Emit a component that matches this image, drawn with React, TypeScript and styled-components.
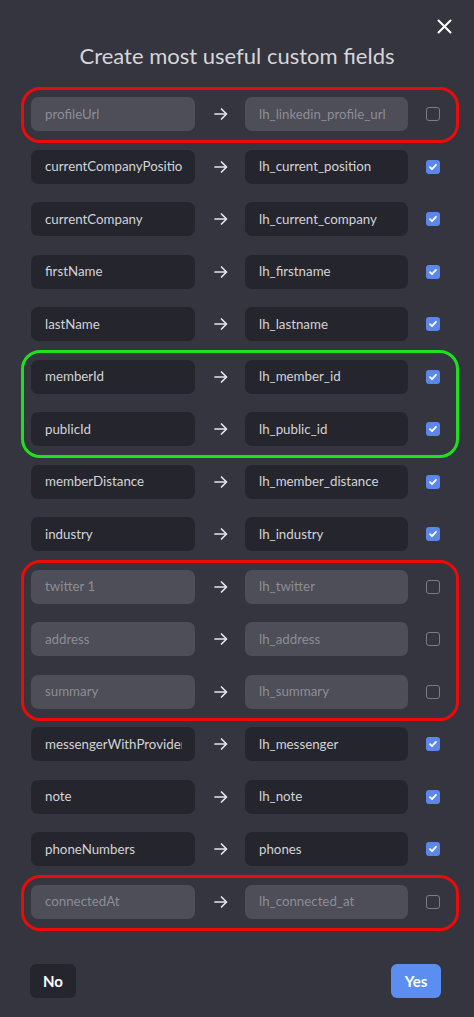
import React from "react";
import styled, { createGlobalStyle } from "styled-components";

const GlobalStyle = createGlobalStyle`
  html, body {
    margin: 0;
    padding: 0;
    background: #34353e;
  }
  body {
    font-family: Lato, "Noto Sans", sans-serif;
  }
`;

interface Field {
  from: string;
  to: string;
  checked: boolean;
}

const fields: Field[] = [
  { from: "profileUrl", to: "lh_linkedin_profile_url", checked: false },
  { from: "currentCompanyPosition", to: "lh_current_position", checked: true },
  { from: "currentCompany", to: "lh_current_company", checked: true },
  { from: "firstName", to: "lh_firstname", checked: true },
  { from: "lastName", to: "lh_lastname", checked: true },
  { from: "memberId", to: "lh_member_id", checked: true },
  { from: "publicId", to: "lh_public_id", checked: true },
  { from: "memberDistance", to: "lh_member_distance", checked: true },
  { from: "industry", to: "lh_industry", checked: true },
  { from: "twitter 1", to: "lh_twitter", checked: false },
  { from: "address", to: "lh_address", checked: false },
  { from: "summary", to: "lh_summary", checked: false },
  { from: "messengerWithProvider", to: "lh_messenger", checked: true },
  { from: "note", to: "lh_note", checked: true },
  { from: "phoneNumbers", to: "phones", checked: true },
  { from: "connectedAt", to: "lh_connected_at", checked: false },
];

// groups of rows, some highlighted with a coloured outline
const groups: { start: number; end: number; mark?: "red" | "green" }[] = [
  { start: 0, end: 1, mark: "red" },
  { start: 1, end: 5 },
  { start: 5, end: 7, mark: "green" },
  { start: 7, end: 9 },
  { start: 9, end: 12, mark: "red" },
  { start: 12, end: 15 },
  { start: 15, end: 16, mark: "red" },
];

const Modal = styled.div`
  width: 474px;
  height: 1017px;
  box-sizing: border-box;
  background: #34353e;
  display: flex;
  flex-direction: column;
  padding-top: 17px;
`;

const CloseRow = styled.div`
  display: flex;
  justify-content: flex-end;
  padding-right: 21px;
  height: 18px;
`;

const CloseButton = styled.button`
  background: none;
  border: none;
  padding: 0;
  width: 18px;
  height: 18px;
  display: flex;
  align-items: center;
  justify-content: center;
  cursor: pointer;
`;

const Title = styled.h2`
  margin: 7px 0 0;
  font-size: 22px;
  line-height: 28px;
  font-weight: 400;
  color: #d6d6da;
  text-align: center;
`;

const List = styled.div`
  margin-top: 27px;
  padding: 0 34px 0 31px;
  display: flex;
  flex-direction: column;
  gap: 18.5px;
`;

const Group = styled.div<{ $mark?: "red" | "green" }>`
  position: relative;
  display: flex;
  flex-direction: column;
  gap: 18.5px;

  &::after {
    content: "";
    display: ${({ $mark }) => ($mark ? "block" : "none")};
    position: absolute;
    top: -10px;
    bottom: -12px;
    left: -10px;
    right: -19px;
    border: 3.5px solid ${({ $mark }) => ($mark === "green" ? "#1ee01e" : "#ec0b0b")};
    border-radius: 19px;
    pointer-events: none;
  }
`;

const Row = styled.div`
  display: grid;
  grid-template-columns: 164px 50px 163px 1fr;
  align-items: center;
  height: 34px;
`;

const FieldInput = styled.input<{ $disabled: boolean }>`
  box-sizing: border-box;
  width: 100%;
  height: 34px;
  border: none;
  outline: none;
  border-radius: 7px;
  padding: 0 13px 1px 14px;
  font-family: Lato, "Noto Sans", sans-serif;
  font-size: 13.3px;
  background: ${({ $disabled }) => ($disabled ? "#4d4e57" : "#25262d")};
  color: ${({ $disabled }) => ($disabled ? "#8c8d95" : "#d3d3d8")};
`;

const ArrowCell = styled.div`
  display: flex;
  justify-content: center;
  align-items: center;
  padding-left: 2px;
`;

const Check = styled.span<{ $checked: boolean }>`
  justify-self: end;
  box-sizing: border-box;
  width: 14px;
  height: 14px;
  border-radius: 3px;
  display: flex;
  align-items: center;
  justify-content: center;
  background: ${({ $checked }) => ($checked ? "#5b87ea" : "transparent")};
  border: ${({ $checked }) => ($checked ? "none" : "1.5px solid #7b7c84")};
`;

const Footer = styled.div`
  margin-top: 45px;
  padding: 0 33px 0 30px;
  display: flex;
  justify-content: space-between;
`;

const Button = styled.button<{ $primary?: boolean }>`
  height: 34px;
  padding: 0 12px;
  min-width: ${({ $primary }) => ($primary ? "50px" : "46px")};
  border: none;
  border-radius: 6px;
  font-family: Lato, "Noto Sans", sans-serif;
  font-weight: 700;
  font-size: 15px;
  color: #ffffff;
  background: ${({ $primary }) => ($primary ? "#5b8ef0" : "#25262d")};
  cursor: pointer;
`;

const Arrow = () => (
  <svg width="14" height="14" viewBox="0 0 14 14" fill="none">
    <path
      d="M1 7h11.5M7.5 2l5 5-5 5"
      stroke="#e4e4e8"
      strokeWidth="1.7"
      strokeLinecap="round"
      strokeLinejoin="round"
    />
  </svg>
);

const Tick = () => (
  <svg width="10" height="10" viewBox="0 0 10 10" fill="none">
    <path
      d="M2 5.2l2 2 4-4.4"
      stroke="#ffffff"
      strokeWidth="1.8"
      strokeLinecap="round"
      strokeLinejoin="round"
    />
  </svg>
);

const FieldRow = ({ field }: { field: Field }) => (
  <Row>
    <FieldInput readOnly value={field.from} $disabled={!field.checked} />
    <ArrowCell>
      <Arrow />
    </ArrowCell>
    <FieldInput readOnly value={field.to} $disabled={!field.checked} />
    <Check $checked={field.checked}>{field.checked && <Tick />}</Check>
  </Row>
);

export default function App() {
  return (
    <>
      <GlobalStyle />
      <Modal>
        <CloseRow>
          <CloseButton aria-label="close">
            <svg width="15" height="15" viewBox="0 0 15 15">
              <path
                d="M1.5 1.5l12 12M13.5 1.5l-12 12"
                stroke="#ffffff"
                strokeWidth="2"
                strokeLinecap="round"
              />
            </svg>
          </CloseButton>
        </CloseRow>
        <Title>Create most useful custom fields</Title>
        <List>
          {groups.map((g) => (
            <Group key={g.start} $mark={g.mark}>
              {fields.slice(g.start, g.end).map((f) => (
                <FieldRow key={f.from} field={f} />
              ))}
            </Group>
          ))}
        </List>
        <Footer>
          <Button>No</Button>
          <Button $primary>Yes</Button>
        </Footer>
      </Modal>
    </>
  );
}
